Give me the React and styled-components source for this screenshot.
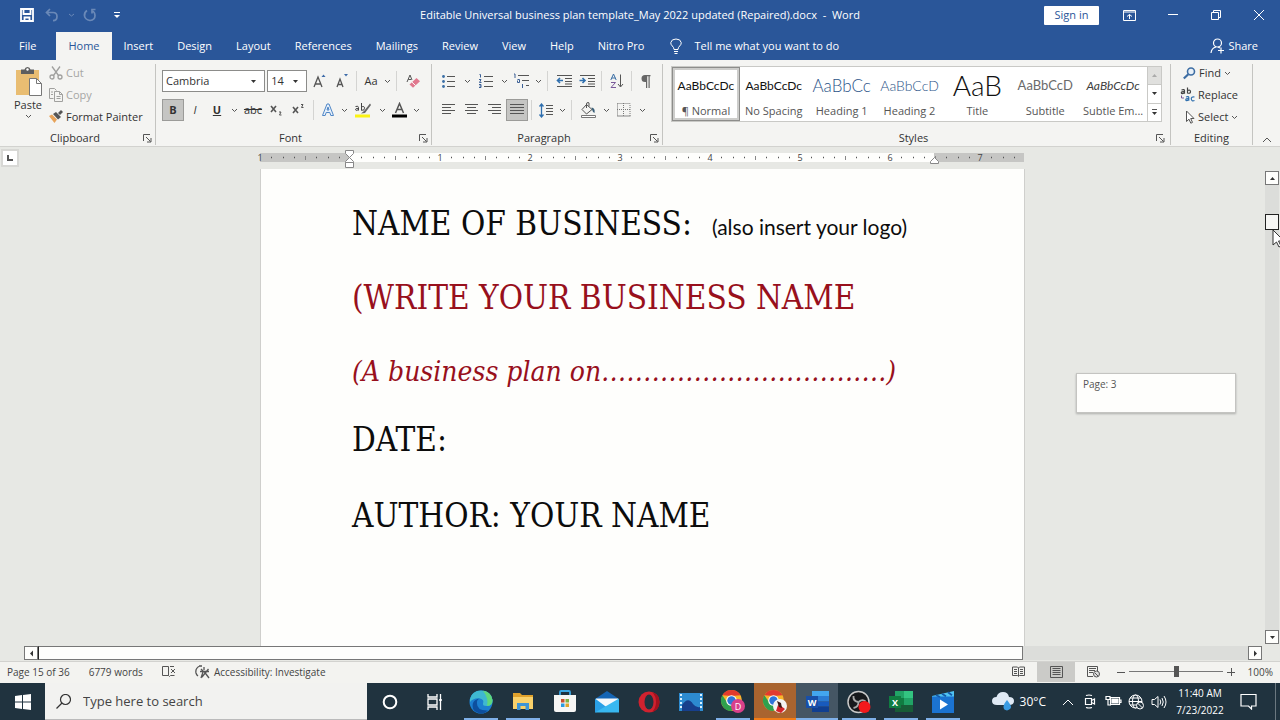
import React from "react";
import styled, { createGlobalStyle, css } from "styled-components";

const blue = "#2a5699";
const ui = '"Open Sans", "Noto Sans", sans-serif';
const body = 'Lato, "Open Sans", sans-serif';
const serif = '"DejaVu Serif Condensed", "DejaVu Serif", serif';

const Global = createGlobalStyle`
  * { box-sizing: border-box; }
  body { margin: 0; font-family: ${ui}; font-size: 11px; line-height: 16px; color: #333; background: #e7e8e4; }
  button, input, select { font: inherit; color: inherit; margin: 0; padding: 0; border: 0; background: none; border-radius: 0; }
  svg { display: block; flex: none; }
  p { margin: 0; }
`;

const Screen = styled.div`
  min-height: 100vh;
  display: flex;
  flex-direction: column;
  overflow: hidden;
`;

/* title bar and tabs */
const TitleBar = styled.header`
  display: grid;
  grid-template-columns: 1fr auto 1fr;
  align-items: center;
  height: 30px;
  background: ${blue};
  color: #fff;
`;
const QuickAccess = styled.div`
  display: flex;
  align-items: center;
  gap: 3px;
  padding-left: 16px;
`;
const QuickButton = styled.button`
  display: grid;
  place-items: center;
  width: ${(p) => p.$w || 22}px;
  height: 22px;
  opacity: ${(p) => (p.$dim ? 0.3 : 1)};
`;
const DocTitle = styled.h1`
  margin: 0;
  font-size: 11px;
  line-height: 16px;
  font-weight: 400;
  white-space: pre;
`;
const WindowControls = styled.div`
  display: flex;
  justify-content: flex-end;
  align-items: center;
`;
const SignIn = styled.button`
  width: 55px;
  height: 19px;
  margin-right: 9px;
  border-radius: 1px;
  background: #fff;
  color: ${blue};
`;
const WindowButton = styled.button`
  display: grid;
  place-items: center;
  width: 43px;
  height: 28px;
`;
const Tabs = styled.nav`
  display: flex;
  align-items: stretch;
  height: 30px;
  padding-left: 1px;
  background: ${blue};
  color: #fff;
`;
const Tab = styled.button`
  padding: 2px 12px 0;
  white-space: nowrap;
  ${(p) => p.$file && css`padding: 2px 18px 0; margin-right: 2px;`}
  ${(p) => p.$active && css`background: #f4f4f2; color: ${blue}; margin-top: 2px; padding-top: 0;`}
`;
const TellMe = styled.button`
  display: flex;
  align-items: center;
  gap: 12px;
  margin-left: 14px;
  padding-top: 2px;
`;
const Share = styled.button`
  display: flex;
  align-items: center;
  gap: 3px;
  margin-left: auto;
  margin-right: 22px;
  padding-top: 2px;
`;

/* ribbon */
const Ribbon = styled.section`
  display: flex;
  height: 87px;
  padding: 4px 0 1px 1px;
  background: #f4f4f2;
  border-bottom: 1px solid #d2d2cf;
`;
const Group = styled.div`
  display: flex;
  flex-direction: column;
  flex: ${(p) => (p.$grow ? "1 1 0" : "none")};
  min-width: 0;
  width: ${(p) => (p.$w ? p.$w + "px" : "auto")};
  padding: 0 ${(p) => (p.$grow ? 8 : 6)}px;
  border-right: 1px solid #c4c4c1;
`;
const GroupBody = styled.div`
  display: flex;
  flex: 1;
  min-width: 0;
`;
const ToolRows = styled.div`
  display: flex;
  flex-direction: column;
  gap: 7px;
  flex: 1;
  padding-top: 6px;
`;
const GroupFoot = styled.div`
  display: flex;
  align-items: center;
  height: 14px;
  & > span { flex: 1; text-align: center; }
  & > button { margin-right: -3px; }
`;
const ToolRow = styled.div`
  display: flex;
  align-items: center;
  height: 22px;
`;
const Tool = styled.button`
  display: grid;
  place-items: center;
  flex: none;
  width: ${(p) => p.$w || 22}px;
  height: 22px;
  ${(p) => p.$on && css`background: #c5c5c3; border: 1px solid #9b9b99;`}
`;
const Divider = styled.span`
  flex: none;
  width: 1px;
  height: 20px;
  margin: 0 4px 0 3px;
  background: #d4d4d2;
`;
const Combo = styled.label`
  display: grid;
  grid-template-columns: 1fr 14px;
  align-items: center;
  width: ${(p) => p.$w}px;
  height: 22px;
  margin-right: 2px;
  border: 1px solid #8c8c8a;
  background: #fff;
  select {
    grid-area: 1 / 1 / 2 / 3;
    appearance: none;
    width: 100%;
    padding-left: 3px;
    outline: 0;
  }
  svg { grid-area: 1 / 2; pointer-events: none; }
`;
const PasteButton = styled.button`
  display: flex;
  flex-direction: column;
  align-items: center;
  gap: 1px;
  width: 42px;
  height: 62px;
  padding-top: 3px;
`;
const Stack = styled.div`
  display: flex;
  flex-direction: column;
`;
const SmallButton = styled.button`
  display: flex;
  align-items: center;
  gap: 3px;
  height: 22px;
  padding-left: ${(p) => p.$indent || 0}px;
  padding-bottom: 4px;
  white-space: nowrap;
  color: ${(p) => (p.$off ? "#a6a6a4" : "#333")};
`;
const Gallery = styled.div`
  display: flex;
  height: 56px;
  margin-top: 2px;
  border: 1px solid #c9c9c6;
  background: #fff;
  flex: 1;
  min-width: 0;
`;
const StyleTile = styled.button`
  display: grid;
  grid-template-rows: 36px 16px;
  justify-items: center;
  flex: 1 1 0;
  min-width: 0;
  white-space: nowrap;
  color: #555;
  ${(p) => p.$on && css`box-shadow: inset 0 0 0 1px #8d8d8b, inset 0 0 0 3px #cdcdcb;`}
`;
const Preview = styled.span`
  font-family: ${body};
  font-size: ${(p) => p.$size || 12}px;
  line-height: 37px;
  font-weight: ${(p) => p.$weight || 400};
  font-style: ${(p) => (p.$italic ? "italic" : "normal")};
  color: ${(p) => p.$color || "#111"};
`;
const GalleryScroll = styled.div`
  display: flex;
  flex-direction: column;
  width: 14px;
  border-left: 1px solid #c9c9c6;
`;
const ScrollStep = styled.button`
  display: grid;
  place-items: center;
  flex: 1;
  background: ${(p) => (p.$off ? "#e0e0de" : "#fff")};
  & + & { border-top: 1px solid #c9c9c6; }
`;
const Collapse = styled.button`
  display: flex;
  align-items: flex-end;
  justify-content: center;
  flex: none;
  width: 27px;
  padding-bottom: 2px;
`;

/* workspace */
const Workspace = styled.main`
  position: relative;
  display: grid;
  grid-template-columns: 20px 1fr 15px;
  grid-template-rows: 22px 1fr 15px;
  flex: 1;
  min-height: 0;
`;
const TabStop = styled.button`
  display: grid;
  place-items: center;
  width: 18px;
  height: 18px;
  margin: 2px 0 0 1px;
  background: #fff;
  border: 2px solid #d8d8d5;
`;
const RulerRow = styled.div`
  display: flex;
  justify-content: center;
  overflow: hidden;
`;
const Canvas = styled.div`
  grid-column: 2;
  display: flex;
  justify-content: center;
  overflow: hidden;
`;
const Sheet = styled.article`
  width: 765px;
  padding: 35px 60px 60px 91px;
  background: #fefefc;
  border: solid #cfcfcc;
  border-width: 0 1px;
`;
const Line = styled.p`
  display: flex;
  align-items: baseline;
  height: 40px;
  font-family: ${serif};
  font-size: ${(p) => (p.$italic ? 28 : 33)}px;
  font-style: ${(p) => (p.$italic ? "italic" : "normal")};
  line-height: 40px;
  margin-bottom: ${(p) => p.$after || 36}px;
  white-space: nowrap;
  color: ${(p) => (p.$red ? "#98101c" : "#0c0c0c")};
`;
const Aside = styled.span`
  margin-left: 20px;
  font-family: ${body};
  font-size: 21px;
`;
const VScroll = styled.div`
  grid-column: 3;
  grid-row: 2;
  display: flex;
  flex-direction: column;
  padding: 2px 1px 2px 0;
`;
const HScroll = styled.div`
  grid-column: 1 / 4;
  display: flex;
  padding: 0 18px 1px 24px;
`;
const ScrollButton = styled.button`
  display: grid;
  place-items: center;
  flex: none;
  width: 14px;
  height: 14px;
  background: #fefefc;
  border: 1px solid #777;
`;
const VTrack = styled.div`
  flex: 1;
  padding-top: 29px;
  background: #dcddda;
`;
const VThumb = styled.div`
  height: 16px;
  border: 1px solid #222;
  background: #f6f6f4;
`;
const HTrack = styled.div`
  flex: 1;
  display: flex;
  background: #dcddda;
`;
const HThumb = styled.div`
  width: 81.4%;
  border: 1px solid #777;
  border-left: 1px solid #222;
  background: #fefefc;
`;
const PageTip = styled.div`
  position: absolute;
  top: 226px;
  right: 44px;
  width: 160px;
  height: 40px;
  padding: 2px 6px;
  background: #fefefc;
  border: 1px solid #c4c4c1;
  box-shadow: 0 1px 2px rgba(0, 0, 0, 0.25);
  font-size: 10px;
  color: #555;
`;
const Pointer = styled.svg`
  position: absolute;
  top: 82px;
  right: -6px;
`;

/* status bar */
const StatusBar = styled.footer`
  display: flex;
  align-items: center;
  height: 22px;
  padding: 0 7px 2px;
  background: #f3f3f0;
  border-top: 1px solid #d2d2cf;
  font-size: 10px;
  color: #444;
`;
const StatusItem = styled.button`
  display: flex;
  align-items: center;
  gap: 4px;
  margin-right: 19px;
  white-space: nowrap;
`;
const StatusRight = styled.div`
  display: flex;
  align-items: center;
  margin-left: auto;
`;
const ViewButton = styled.button`
  display: grid;
  place-items: center;
  width: 38px;
  height: 20px;
  background: ${(p) => (p.$on ? "#cbcbc8" : "none")};
`;
const ZoomStep = styled.button`
  display: grid;
  place-items: center;
  width: 16px;
`;
const ZoomSlider = styled.input`
  appearance: none;
  width: 94px;
  height: 12px;
  background: linear-gradient(#777, #777) center / 100% 1px no-repeat;
  &::-webkit-slider-thumb { appearance: none; width: 5px; height: 11px; background: #555; }
`;
const ZoomValue = styled.span`
  width: 34px;
  text-align: right;
`;

/* taskbar */
const Taskbar = styled.footer`
  display: flex;
  height: 37px;
  background: #20333f;
  color: #fff;
`;
const Start = styled.button`
  display: grid;
  place-items: center;
  width: 45px;
`;
const Search = styled.label`
  display: flex;
  align-items: center;
  gap: 12px;
  width: 322px;
  padding-left: 11px;
  background: #f2f2f0;
  color: #333;
  border-bottom: 1px solid #bbb;
  input { flex: 1; outline: 0; font-size: 13px; line-height: 20px; }
  input::placeholder { color: #444; opacity: 1; }
`;
const TaskButton = styled.button`
  display: grid;
  place-items: center;
  width: ${(p) => p.$w || 42}px;
  background: ${(p) => p.$bg || "none"};
  ${(p) => p.$open && css`
    background-image: linear-gradient(${p.$line || "#7fb0e8"}, ${p.$line || "#7fb0e8"});
    background-size: ${p.$bg ? "100%" : "34px"} 2px;
    background-position: bottom;
    background-repeat: no-repeat;
  `}
`;
const Apps = styled.div`
  display: flex;
  margin-left: 3px;
`;
const Tray = styled.div`
  display: flex;
  align-items: center;
  margin-left: auto;
`;
const Weather = styled.button`
  display: flex;
  align-items: center;
  gap: 6px;
  margin-right: 10px;
  font-size: 12px;
`;
const TrayButton = styled.button`
  display: grid;
  place-items: center;
  width: 23px;
  height: 30px;
`;
const Clock = styled.div`
  width: 58px;
  text-align: center;
  font-size: 10px;
  line-height: 17px;
`;
const Notifications = styled(TrayButton)`
  width: 39px;
  margin-right: 7px;
`;
const ShowDesktop = styled.button`
  width: 5px;
  height: 37px;
  border-left: 1px solid #6b7880;
`;

/* icons */
const Svg = ({ w = 16, h = w, children, ...rest }) => (
  <svg width={w} height={h} viewBox={`0 0 ${w} ${h}`} fill="none" stroke="#555" strokeWidth="1" aria-hidden="true" {...rest}>
    {children}
  </svg>
);
const ChevronIcon = () => <Svg w={7} h={5}><path d="M1 1l2.500 2.500L6 1" /></Svg>;
const Chevron = ({ w = 12, label }) => <Tool $w={w} aria-label={label}><ChevronIcon /></Tool>;
const Arrow = ({ dir = "down", color = "#333" }) => (
  <Svg w={7} h={7} stroke="none" fill={color}>
    <path d={{ down: "M1 2h5l-2.500 3z", up: "M1 5h5l-2.500-3z", left: "M5 .5v6l-3-3z", right: "M2 .5v6l3-3z" }[dir]} />
  </Svg>
);
const Launcher = ({ label }) => (
  <button aria-label={label}>
    <Svg w={9} h={9}><path d="M.5 7V.5H7M3 3l4.500 4.500M8 4v4H4" /></Svg>
  </button>
);
const Lines = ({ rows }) => (
  <Svg w={16} h={14}>
    {rows.map(([x, n], i) => <path key={i} d={`M${x} ${i * 3 + 1.5}h${n}`} />)}
  </Svg>
);
const BulletIcon = () => (
  <Svg w={14} h={15}>
    <path d="M5 2.500h8M5 7.500h8M5 12.500h8" />
    <g fill="#3a6ea5" stroke="none"><circle cx="1.500" cy="2.500" r="1.400" /><circle cx="1.500" cy="7.500" r="1.400" /><circle cx="1.500" cy="12.500" r="1.400" /></g>
  </Svg>
);
const NumberIcon = () => (
  <Svg w={14} h={16}>
    <path d="M5 3.500h9M5 8.500h9M5 13.500h9" />
    <g stroke="#3a5f95"><path d="M.5 1.500h1v3M0 6.500h2L.5 9.500H2.500M0 11.500h2v3H0M.5 13h1.500" /></g>
  </Svg>
);
const MultiIcon = () => (
  <Svg w={17} h={16}>
    <path d="M5 2.500h11M9 7.500h7M13 12.500h3" />
    <g stroke="#3a5f95"><path d="M1 1h1v4M4.500 6.500h2v3h-2v-2M9.500 11v4" /></g>
  </Svg>
);
const IndentIcon = ({ out }) => (
  <Svg w={16} h={14}>
    <path d="M1 1.500h15M9 4.500h7M9 7.500h7M1 12.500h15M9 10h7" />
    <path d={out ? "M7 6.500H1.500M4 4L1.500 6.500 4 9" : "M.5 6.500H6M3.500 4L6 6.500 3.500 9"} stroke="#2f6fae" strokeWidth="1.600" />
  </Svg>
);
const SortIcon = () => (
  <Svg w={14} h={16}>
    <path d="M.8 7L3.500 1l2.700 6M1.800 5h3.500" stroke="#3a6ea5" />
    <path d="M1 9.500h4.500L1 14.500h5" stroke="#7a5a9a" />
    <path d="M10.500 1.500v12M8 11l2.500 3 2.500-3" />
  </Svg>
);
const SpacingIcon = () => (
  <Svg w={14} h={15}>
    <path d="M7 2.500h7M7 5.500h7M7 8.500h7M7 11.500h7" />
    <path d="M2.500 1v13M.5 3.500l2-2.500 2 2.500M.5 11.500l2 2.500 2-2.500" stroke="#2f6fae" strokeWidth="1.300" />
  </Svg>
);
const ShadeIcon = () => (
  <Svg w={17} h={16}>
    <path d="M6.500 2.500L12 7.500 6.500 12 2 7.500zM6.500 6V2q0-1.500 1.500-1.500T9 2v2.500" />
    <path d="M11.500 5.500q4 .5 3 5.500-2-1-2.500-3.500z" fill="#3a6079" stroke="none" />
    <path d="M1.500 13.500h14v2h-14z" fill="#fff" stroke="#777" />
  </Svg>
);
const BorderIcon = () => (
  <Svg w={14} h={14}>
    <path d="M.5.5h12.500v12.500M.5.5v12.500M6.500 0v13M0 6.500h13" strokeDasharray="1 1" stroke="#777" />
    <path d="M0 13h13.500" stroke="#888" />
  </Svg>
);
const GrowIcon = ({ down }) => (
  <Svg w={14} h={16}>
    {down
      ? <><path d="M2 14l3-8 3 8M3.200 11.500h3.600" strokeWidth="1.300" /><path d="M9 1h4l-2 2.500z" fill="#3c6aa8" stroke="none" /></>
      : <><path d="M1 14L5 4l4 10M2.500 11h5" strokeWidth="1.300" /><path d="M8.500 4h4l-2-2.500z" fill="#3c6aa8" stroke="none" /></>}
  </Svg>
);
const EraserIcon = () => (
  <Svg w={15} h={15}>
    <path d="M1 8l3-7 2 5M2.200 5.500H5" />
    <path d="M3.500 10.500L10.500 4l3.500 3.200-7 6.600z" fill="#e0788e" stroke="none" />
    <path d="M6 8.200l3.500 3.300" stroke="#fff" />
  </Svg>
);
const OutlineAIcon = () => (
  <Svg w={14} h={16}>
    <path d="M1.500 13.500L6 2h2l4.500 11.500h-2.700l-1-3H5.200l-1 3zM6 8h2L7 5z" stroke="#4f86c6" fill="#e6f0fb" />
  </Svg>
);
const HighlightIcon = () => (
  <Svg w={18} h={17}>
    <path d="M1.500 4.500q3-1 3 1v3M4.500 6.300q-3.300 0-3 1.500t3-.2M7.500 1v7.500M7.500 5q3-1.500 3 1.200t-3 2" stroke="#444" />
    <path d="M16 1.500L10 9l-3 2.500 4-.5 6-8z" fill="#666" stroke="none" />
    <path d="M1 12.500h15v3H1z" fill="#fbf313" stroke="none" />
  </Svg>
);
const FontColorIcon = () => (
  <Svg w={15} h={16}>
    <path d="M3.500 11L7.500 1.500 11.500 11M5 7.500h5" strokeWidth="1.500" />
    <path d="M0 12.500h15v3H0z" fill="#000" stroke="none" />
  </Svg>
);
const PasteIcon = () => (
  <Svg w={28} h={29}>
    <path d="M2 3h23v25H2z" fill="#e9bd72" stroke="none" />
    <path d="M7 2.500h3.500q.5-2.500 3-2.500t3 2.500H20V7H7z" fill="#5e5e5e" stroke="none" /><circle cx="13.500" cy="2.500" r="1.200" fill="#fff" stroke="none" />
    <path d="M15.500 11.500h7l5 5v12h-12z" fill="#fff" stroke="#777" /><path d="M22.500 11.500v5h5" stroke="#777" />
  </Svg>
);
const CutIcon = () => (
  <Svg w={14} h={14} stroke="#a0a09e" strokeWidth="1.300">
    <path d="M3 .5l6.500 9M11 .5l-6.500 9" /><circle cx="3" cy="11" r="2" /><circle cx="11" cy="11" r="2" />
  </Svg>
);
const CopyIcon = () => (
  <Svg w={14} h={14} stroke="#a0a09e">
    <path d="M4.500 10.500h-4V.5h5l2 2M2 4h2M2 6.500h2" /><path d="M5.500 3.500h5l3 3v7h-8zM10.500 3.500v3h3M7.500 8.500h4M7.500 10.500h4" />
  </Svg>
);
const PainterIcon = () => (
  <Svg w={14} h={14} stroke="none">
    <path d="M0 6l3-1.500L8 9.500 5.500 13z" fill="#e7a35a" /><path d="M4 4l3-2 5 5-3 2.500z" fill="#555" /><path d="M9 3l3-3 2 2-3 3z" fill="#555" />
  </Svg>
);
const FindIcon = () => (
  <Svg w={13} h={13} stroke="#3d6da3" strokeWidth="1.600"><circle cx="8" cy="4.500" r="3.500" fill="#e8f0f8" /><path d="M5.300 7.300L.8 11.500" strokeWidth="2.200" /></Svg>
);
const ReplaceIcon = () => (
  <Svg w={15} h={16}>
    <path d="M1.500 3q3-1 3 .8v3M4.500 4.700q-3.500-.2-3.200 1.300t3.200-.2M7.500.5v6M7.500 3.500q3-1 3 1.200t-3 1.300" stroke="#444" strokeWidth="1.200" />
    <path d="M6 10q2.800-1 2.800.8v3M8.800 11.700q-3.300-.2-3 1.300t3-.2M14.500 10q-3.500-.6-3.200 2t3.200 1.500" stroke="#2f6fae" strokeWidth="1.200" />
    <path d="M1.500 8.500v2.500h2.500" stroke="#7a5a9a" />
  </Svg>
);
const SelectIcon = () => <Svg w={10} h={14}><path d="M1.500 1v10.500l2.500-2.300 1.800 4 1.700-.8-1.800-3.900h3.300z" fill="#fff" /></Svg>;

const ALIGN = {
  left: [[1, 13], [1, 9], [1, 13], [1, 9]],
  center: [[1, 13], [3, 9], [1, 13], [3, 9]],
  right: [[1, 13], [5, 9], [1, 13], [5, 9]],
  justify: [[1, 14], [1, 14], [1, 14], [1, 14]],
};

const STYLES = [
  { name: "¶ Normal", text: "AaBbCcDc", on: true },
  { name: "No Spacing", text: "AaBbCcDc" },
  { name: "Heading 1", text: "AaBbCc", size: 17, weight: 300, color: "#2c5488" },
  { name: "Heading 2", text: "AaBbCcD", size: 14, weight: 300, color: "#2c5488" },
  { name: "Title", text: "AaB", size: 28, weight: 300 },
  { name: "Subtitle", text: "AaBbCcD", size: 13, color: "#6a6a6a" },
  { name: "Subtle Em...", text: "AaBbCcDc", italic: true, color: "#404040" },
];

const Ruler = () => {
  const marks = [];
  for (let k = -8; k <= 59; k++) {
    const x = 90 + k * 11.25;
    if (k === 0) continue;
    if (k % 8 === 0) marks.push(<text key={k} x={x} y={11.5} textAnchor="middle" fontSize="9" fill="#444" stroke="none">{Math.abs(k / 8)}</text>);
    else if (k % 4 === 0) marks.push(<path key={k} d={`M${Math.round(x) + 0.5} 7v4`} stroke="#888" />);
    else marks.push(<path key={k} d={`M${Math.round(x)} 8.500h1`} strokeWidth="1.500" />);
  }
  return (
    <Svg w={765} h={22} overflow="visible">
      <path d="M0 6h764v9H0z" fill="#c6c6c4" stroke="none" />
      <path d="M90 6h584v9H90z" fill="#fefefc" stroke="none" />
      <g transform="translate(0 2)">{marks}</g>
      <g fill="#fff" stroke="#888">
        <path d="M85.500 3.500h8v3l-4 4-4-4zM89.500 10.500l4 4v1h-8v-1zM85.500 15.500h8v5h-8z" />
        <path d="M674.500 10.500l4 4v2h-8v-2z" />
      </g>
    </Svg>
  );
};

/* taskbar pictures */
const Edge = () => (
  <Svg w={24} stroke="none">
    <circle cx="12" cy="12" r="11.500" fill="#1c7fd0" />
    <path d="M1 9Q3 .5 12 .5q10 0 11.500 9.500.5 6-6 6-4 0-3.500-2.500 1.500-4-3-5Q5 7.500 1 12z" fill="#3fb8d0" />
    <path d="M14 .7q8.500 1.300 9.500 9.300.3 5.500-5.500 6 2-7-4-15.300z" fill="#5fd77c" />
    <path d="M8 12q-1 9 11 8.500-4 4-9 2.700Q2 21 4 13q1.500-4 7-4.500-3 1-3 3.500z" fill="#0d4f9e" />
  </Svg>
);
const Folder = () => (
  <Svg w={22} h={19} stroke="none">
    <path d="M1 1h7l2 2h11v14H1z" fill="#e0a22c" /><path d="M1 5h20v12H1z" fill="#f9d16a" />
    <path d="M5 18v-7h12v7h-3.500v-4h-5v4z" fill="#3f95d6" />
  </Svg>
);
const Store = () => (
  <Svg w={22} h={23} stroke="none">
    <path d="M6 6V2q0-1 1-1h8q1 0 1 1v4" stroke="#3aa7e4" strokeWidth="1.800" /><path d="M0 5h22v15q0 2-2 2H2q-2 0-2-2z" fill="#f6f6f4" />
    <path d="M7 9h3.500v3.500H7z" fill="#c8502e" /><path d="M11.500 9H15v3.500h-3.500z" fill="#7db343" /><path d="M7 13.500h3.500V17H7z" fill="#2b9be0" /><path d="M11.500 13.500H15V17h-3.500z" fill="#e0a62a" />
  </Svg>
);
const Mail = () => (
  <Svg w={24} h={22} stroke="none">
    <path d="M0 8L12 0l12 8v4H0z" fill="#1565b4" /><path d="M1 7.500h22v9H1z" fill="#f4f8fb" /><path d="M0 7.500L14 18 0 21.500z" fill="#2aa0e6" /><path d="M24 7.500L0 21.500h24z" fill="#38b8f0" />
  </Svg>
);
const Opera = () => (
  <Svg w={22} stroke="none"><circle cx="11" cy="11" r="10.500" fill="#d0222f" /><ellipse cx="11" cy="11" rx="4.500" ry="7.600" fill="#20333f" /><path d="M14 1q7.500 2 7.500 10T14 21q4-4 4-10T14 1z" fill="#a3121f" /></Svg>
);
const Film = () => (
  <Svg w={24} h={18} stroke="none">
    <path d="M0 0h24v18H0z" fill="#2d8bd0" /><path d="M3 12q6-9 11-1 3 4 7 3v4H3z" fill="#173f8c" />
    <path d="M2 1v16M22 1v16" stroke="#d9f1ff" strokeWidth="2" strokeDasharray="2 2" />
  </Svg>
);
const Chrome = ({ badge }) => (
  <Svg w={26} h={25} stroke="none">
    <circle cx="11.500" cy="11.500" r="10.500" fill="#f8b62c" /><path d="M2.400 6.200A10.500 10.500 0 0 1 20.600 6.200L11.500 7z" fill="#e23a2e" /><path d="M2.400 6.200A10.500 10.500 0 0 0 11.500 22L15 14 7.500 14z" fill="#2fa04e" />
    <circle cx="11.500" cy="11.500" r="5.300" fill="#fff" /><circle cx="11.500" cy="11.500" r="4.200" fill="#2f74d8" />
    {badge === "D"
      ? <><circle cx="18" cy="17" r="7" fill="#d8408a" /><text x="18" y="20.500" textAnchor="middle" fontSize="9" fill="#fff">D</text></>
      : <><circle cx="18" cy="17" r="7" fill="#f3f3f3" /><path d="M14 22l2-6 3 1 4 3-4 4z" fill="#d3242c" /><path d="M15 12l4 2 1 5-3-1z" fill="#3a1a18" /></>}
  </Svg>
);
const Word = () => (
  <Svg w={23} h={21} stroke="none">
    <path d="M6 0h17v5H6z" fill="#43a6ee" /><path d="M6 5h17v5.500H6z" fill="#2b7cd3" /><path d="M6 10.500h17v5H6z" fill="#185abd" /><path d="M6 15.500h17V21H6z" fill="#103f91" />
    <path d="M0 5h12v12H0z" fill="#184fa8" /><text x="6" y="14.500" textAnchor="middle" fontSize="9" fontWeight="700" fill="#fff">W</text>
  </Svg>
);
const Excel = () => (
  <Svg w={24} h={21} stroke="none">
    <path d="M6 0h9v7H6z" fill="#21a366" /><path d="M15 0h9v7h-9z" fill="#33c481" /><path d="M6 7h9v7H6z" fill="#107c41" /><path d="M15 7h9v7h-9z" fill="#21a366" /><path d="M6 14h18v7H6z" fill="#185c37" />
    <path d="M0 5h12v12H0z" fill="#107c41" /><text x="6" y="14.500" textAnchor="middle" fontSize="9" fontWeight="700" fill="#fff">X</text>
  </Svg>
);
const Obs = () => (
  <Svg w={24} h={24}>
    <circle cx="11.500" cy="12" r="10.500" fill="#17191c" stroke="#c8c8c8" strokeWidth="1.500" />
    <path d="M11 12q-5-1-4.500-6M11.500 12q4-3.500 7-.5M11.500 12q0 5-5 6" stroke="#a8a8a8" strokeWidth="1.800" /><circle cx="17.500" cy="17" r="6" fill="#f3191b" stroke="none" />
  </Svg>
);
const Movies = () => (
  <Svg w={24} h={22} stroke="none">
    <path d="M1 5L23 0v6H1z" fill="#50c4f3" /><path d="M1 5.500h22V22H1z" fill="#1b73d1" /><path d="M5 4l4 2M11 2.700l4 2.500M17 1.300l4 3" stroke="#1459a8" strokeWidth="1.800" /><path d="M9 8.500v10l8-5z" fill="#fff" />
  </Svg>
);

const TABS = ["Insert", "Design", "Layout", "References", "Mailings", "Review", "View", "Help", "Nitro Pro"];

export default function App() {
  return (
    <Screen>
      <Global />
      <TitleBar>
        <QuickAccess>
          <QuickButton aria-label="Save">
            <Svg w={14} stroke="#fff" strokeWidth="1.800"><path d="M1 1h12v12H1zM3.500 1.500v4.500h7V1.500M4.500 13V9.500h5V13" /></Svg>
          </QuickButton>
          <QuickButton $dim aria-label="Undo">
            <Svg w={14} h={14} stroke="#fff" strokeWidth="1.700"><path d="M5 1L1.500 4.500 5 8M2 4.500h6q4 0 4 4t-4 4.200" /></Svg>
          </QuickButton>
          <QuickButton $dim $w={10} aria-label="Undo list"><Svg w={7} h={5} stroke="#fff"><path d="M1 1l2.500 2L6 1" /></Svg></QuickButton>
          <QuickButton $dim aria-label="Repeat">
            <Svg w={14} h={14} stroke="#fff" strokeWidth="1.700"><path d="M4 2.500Q1 4.500 1.500 8t5.500 4.500q5-.5 5-5 0-2.500-2-4.500M12.500 1.500H9v4" /></Svg>
          </QuickButton>
          <QuickButton $w={26} aria-label="Customize Quick Access Toolbar">
            <Svg w={8} h={8} stroke="#fff"><path d="M1 1.500h6" /><path d="M1 4h6L4 7z" fill="#fff" stroke="none" /></Svg>
          </QuickButton>
        </QuickAccess>
        <DocTitle>{"Editable Universal business plan template_May 2022 updated (Repaired).docx  -  Word"}</DocTitle>
        <WindowControls>
          <SignIn>Sign in</SignIn>
          <WindowButton aria-label="Ribbon Display Options">
            <Svg w={13} h={11} stroke="#fff"><path d="M.5.500h12v10H.5zM.5 2h12" /><path d="M6.500 9V4.500M4 6.500l2.500-2 2.500 2" /></Svg>
          </WindowButton>
          <WindowButton aria-label="Minimize"><Svg w={10} h={2} stroke="#fff"><path d="M0 .5h10" /></Svg></WindowButton>
          <WindowButton aria-label="Restore"><Svg w={10} h={10} stroke="#fff"><path d="M.5 2.500h7v7h-7zM2.500 2.500v-2h7v7h-2" /></Svg></WindowButton>
          <WindowButton aria-label="Close"><Svg w={10} h={10} stroke="#fff"><path d="M0 0l10 10M10 0L0 10" /></Svg></WindowButton>
        </WindowControls>
      </TitleBar>
      <Tabs>
        <Tab $file>File</Tab>
        <Tab $active>Home</Tab>
        {TABS.map((t) => <Tab key={t}>{t}</Tab>)}
        <TellMe>
          <Svg w={12} h={17} stroke="#fff"><path d="M4 11.500Q4 9.500 2.300 8 .5 6.300.8 4.500 1.500 1 6 1t5.200 3.500Q11.500 6.300 9.700 8 8 9.500 8 11.500zM4 13.500h4M4.500 15.500h3" /></Svg>
          Tell me what you want to do
        </TellMe>
        <Share>
          <Svg w={15} h={16} stroke="#fff" strokeWidth="1.200"><circle cx="7.500" cy="5" r="4" /><path d="M1 15q.5-5 5-6M8 9l2 1M11 9.500v6M8 12.500h6" /></Svg>
          Share
        </Share>
      </Tabs>

      <Ribbon>
        <Group $w={155}>
          <GroupBody>
            <PasteButton><PasteIcon />Paste<ChevronIcon /></PasteButton>
            <Stack>
              <SmallButton $off><CutIcon />Cut</SmallButton>
              <SmallButton $off><CopyIcon />Copy</SmallButton>
              <SmallButton><PainterIcon />Format Painter</SmallButton>
            </Stack>
          </GroupBody>
          <GroupFoot><span>Clipboard</span><Launcher label="Clipboard options" /></GroupFoot>
        </Group>
        <Group $w={276}>
          <ToolRows>
            <ToolRow>
              <Combo $w={104}><select aria-label="Font"><option>Cambria</option></select><Arrow /></Combo>
              <Combo $w={40}><select aria-label="Font size"><option>14</option></select><Arrow /></Combo>
              <Tool aria-label="Grow font"><GrowIcon /></Tool>
              <Tool aria-label="Shrink font"><GrowIcon down /></Tool>
              <Divider />
              <Tool $w={20}>Aa</Tool><Chevron label="Change case" />
              <Divider />
              <Tool $w={24} aria-label="Clear formatting"><EraserIcon /></Tool>
            </ToolRow>
            <ToolRow>
              <Tool $on><b>B</b></Tool>
              <Tool><i>I</i></Tool>
              <Tool><u><b>U</b></u></Tool><Chevron label="Underline style" />
              <Tool $w={26}><s>abc</s></Tool>
              <Tool aria-label="Subscript"><Svg w={14} h={12} strokeWidth="1.600"><path d="M1 2l5 6M6 2L1 8" /><path d="M9 8h2L9.500 11h2" strokeWidth="1" /></Svg></Tool>
              <Tool aria-label="Superscript"><Svg w={14} h={12} strokeWidth="1.600"><path d="M1 3l5 6M6 3L1 9" /><path d="M9 .5h2L9.500 3.500h2" strokeWidth="1" /></Svg></Tool>
              <Divider />
              <Tool $w={20} aria-label="Text effects"><OutlineAIcon /></Tool><Chevron label="Text effects list" />
              <Tool $w={26} aria-label="Highlight"><HighlightIcon /></Tool><Chevron label="Highlight colors" />
              <Tool aria-label="Font color"><FontColorIcon /></Tool><Chevron label="Font colors" />
            </ToolRow>
          </ToolRows>
          <GroupFoot><span>Font</span><Launcher label="Font options" /></GroupFoot>
        </Group>
        <Group $w={231}>
          <ToolRows>
            <ToolRow>
              <Tool aria-label="Bullets"><BulletIcon /></Tool><Chevron w={14} label="Bullet styles" />
              <Tool $w={24} aria-label="Numbering"><NumberIcon /></Tool><Chevron label="Number styles" />
              <Tool aria-label="Multilevel list"><MultiIcon /></Tool><Chevron label="List styles" />
              <Divider />
              <Tool $w={24} aria-label="Decrease indent"><IndentIcon out /></Tool>
              <Tool aria-label="Increase indent"><IndentIcon /></Tool>
              <Divider />
              <Tool aria-label="Sort"><SortIcon /></Tool>
              <Divider />
              <Tool $w={20} aria-label="Show paragraph marks">
                <Svg w={10} h={13} stroke="none" fill="#666"><path d="M9.500 0H4Q.5 0 .5 3.500T4 7h1v6h1.200V1.200h1.300V13h1.200V1.200h.8z" /></Svg>
              </Tool>
            </ToolRow>
            <ToolRow>
              <Tool aria-label="Align left"><Lines rows={ALIGN.left} /></Tool>
              <Tool $w={24} aria-label="Center"><Lines rows={ALIGN.center} /></Tool>
              <Tool aria-label="Align right"><Lines rows={ALIGN.right} /></Tool>
              <Tool $on aria-label="Justify"><Lines rows={ALIGN.justify} /></Tool>
              <Divider />
              <Tool $w={20} aria-label="Line spacing"><SpacingIcon /></Tool><Chevron label="Line spacing list" />
              <Divider />
              <Tool $w={24} aria-label="Shading"><ShadeIcon /></Tool><Chevron label="Shading colors" />
              <Tool $w={24} aria-label="Borders"><BorderIcon /></Tool><Chevron label="Border list" />
            </ToolRow>
          </ToolRows>
          <GroupFoot><span>Paragraph</span><Launcher label="Paragraph options" /></GroupFoot>
        </Group>
        <Group $grow>
          <GroupBody>
            <Gallery>
              {STYLES.map((s) => (
                <StyleTile key={s.name} $on={s.on}>
                  <Preview $size={s.size} $weight={s.weight} $color={s.color} $italic={s.italic}>{s.text}</Preview>
                  <span>{s.name}</span>
                </StyleTile>
              ))}
              <GalleryScroll>
                <ScrollStep $off aria-label="Previous styles"><Arrow dir="up" color="#aaa" /></ScrollStep>
                <ScrollStep aria-label="Next styles"><Arrow /></ScrollStep>
                <ScrollStep aria-label="More styles"><Svg w={7} h={7}><path d="M1 .5h5" /><path d="M1 3h5L3.500 6z" fill="#333" stroke="none" /></Svg></ScrollStep>
              </GalleryScroll>
            </Gallery>
          </GroupBody>
          <GroupFoot><span>Styles</span><Launcher label="Styles options" /></GroupFoot>
        </Group>
        <Group $w={82}>
          <GroupBody>
            <Stack>
              <SmallButton $indent={6}><FindIcon />Find<ChevronIcon /></SmallButton>
              <SmallButton $indent={3}><ReplaceIcon />Replace</SmallButton>
              <SmallButton $indent={8}><SelectIcon />Select<ChevronIcon /></SmallButton>
            </Stack>
          </GroupBody>
          <GroupFoot><span>Editing</span></GroupFoot>
        </Group>
        <Collapse aria-label="Collapse the ribbon"><Svg w={10} h={6}><path d="M1 5l4-4 4 4" /></Svg></Collapse>
      </Ribbon>

      <Workspace>
        <TabStop aria-label="Tab stop"><Svg w={6} h={6} strokeWidth="2"><path d="M1 0v5h5" /></Svg></TabStop>
        <RulerRow><Ruler /></RulerRow>
        <Canvas>
          <Sheet>
            <Line $after={34}>NAME OF BUSINESS:<Aside>(also insert your logo)</Aside></Line>
            <Line $red $after={34}>(WRITE YOUR BUSINESS NAME</Line>
            <Line $red $italic $after={28}>(A business plan on…………………………….)</Line>
            <Line>DATE:</Line>
            <Line>AUTHOR: YOUR NAME</Line>
          </Sheet>
        </Canvas>
        <VScroll>
          <ScrollButton aria-label="Scroll up"><Arrow dir="up" /></ScrollButton>
          <VTrack><VThumb /></VTrack>
          <ScrollButton aria-label="Scroll down"><Arrow /></ScrollButton>
        </VScroll>
        <HScroll>
          <ScrollButton aria-label="Scroll left"><Arrow dir="left" /></ScrollButton>
          <HTrack><HThumb /></HTrack>
          <ScrollButton aria-label="Scroll right"><Arrow dir="right" /></ScrollButton>
        </HScroll>
        <PageTip role="tooltip">Page: 3</PageTip>
        <Pointer width="14" height="19" viewBox="0 0 14 19" aria-hidden="true">
          <path d="M1 1v15l3.500-3 2.500 5 2-1-2.500-5H12z" fill="#fff" stroke="#333" />
        </Pointer>
      </Workspace>

      <StatusBar>
        <StatusItem>Page 15 of 36</StatusItem>
        <StatusItem>6779 words</StatusItem>
        <StatusItem aria-label="Proofing errors">
          <Svg w={14} h={13}><path d="M6.500 1.500h-6v9h6l1 1 1-1h4M6.500 1.500v9M8 1.500h4M9 4l4 4M13 4L9 8" /></Svg>
        </StatusItem>
        <StatusItem>
          <Svg w={15} h={14}><path d="M5 1Q0 3 1 8q.5 2 2 3M4 1h3M6 4l3 3M9 2v3M5 6.500h9M8 7l-2 6M9.500 7l4.500 6M13.500 4L7 12" strokeWidth="1.300" /></Svg>
          Accessibility: Investigate
        </StatusItem>
        <StatusRight>
          <ViewButton aria-label="Read mode"><Svg w={13} h={11}><path d="M.5 1h5l1 1 1-1h5v8.500h-5l-1 1-1-1h-5zM6.500 2v8M2 3.500h3M2 5.500h3M2 7.500h3M8 3.500h3M8 5.500h3M8 7.500h3" /></Svg></ViewButton>
          <ViewButton $on aria-label="Print layout"><Svg w={13} h={12}><path d="M.5.5h12v11H.5zM2.500 2.500h8M2.500 4.500h8M2.500 6.500h8M2.500 8.500h8" /></Svg></ViewButton>
          <ViewButton aria-label="Web layout"><Svg w={14} h={12}><path d="M6 10.500H.5V.5h10V5M2 2.500h7M2 4.500h6M2 6.500h4" /><circle cx="9.500" cy="8" r="3" fill="#ddd" /><path d="M8 7l3 3" /></Svg></ViewButton>
          <ZoomStep aria-label="Zoom out"><Svg w={8} h={8}><path d="M0 4.500h8" /></Svg></ZoomStep>
          <ZoomSlider type="range" min="0" max="100" defaultValue="50" aria-label="Zoom" />
          <ZoomStep aria-label="Zoom in"><Svg w={8} h={8}><path d="M0 4.500h8M4.500 0v8" /></Svg></ZoomStep>
          <ZoomValue>100%</ZoomValue>
        </StatusRight>
      </StatusBar>

      <Taskbar>
        <Start aria-label="Start">
          <Svg w={16} h={16} stroke="none" fill="#fff"><path d="M0 2l7-1v6.500H0zM8 1l8-1v7.500H8zM0 8.500h7V15l-7-1zM8 8.500h8V16l-8-1z" /></Svg>
        </Start>
        <Search>
          <Svg w={15} h={15} stroke="#333" strokeWidth="1.200"><circle cx="9.500" cy="5.500" r="5" /><path d="M6 9L.5 14.500" /></Svg>
          <input type="search" aria-label="Search" placeholder="Type here to search" />
        </Search>
        <TaskButton $w={45} aria-label="Cortana"><Svg w={16} stroke="#fff" strokeWidth="2"><circle cx="8" cy="8" r="6.300" /></Svg></TaskButton>
        <TaskButton $w={45} aria-label="Task View"><Svg w={16} h={16} stroke="#fff" strokeWidth="1.300"><path d="M1 0v3h9V0M1 5h9v6H1zM1 16v-3h9v3M13.500 0v16M12 6h3" /></Svg></TaskButton>
        <Apps>
          <TaskButton $open aria-label="Edge"><Edge /></TaskButton>
          <TaskButton $open aria-label="File Explorer"><Folder /></TaskButton>
          <TaskButton aria-label="Store"><Store /></TaskButton>
          <TaskButton aria-label="Mail"><Mail /></TaskButton>
          <TaskButton aria-label="Opera"><Opera /></TaskButton>
          <TaskButton aria-label="Video"><Film /></TaskButton>
          <TaskButton $open aria-label="Chrome"><Chrome badge="D" /></TaskButton>
          <TaskButton $open $bg="#a9642f" $line="#f27c16" aria-label="Chrome, second profile"><Chrome /></TaskButton>
          <TaskButton $open $bg="#455664" aria-label="Word"><Word /></TaskButton>
          <TaskButton $open aria-label="OBS Studio"><Obs /></TaskButton>
          <TaskButton $open aria-label="Excel"><Excel /></TaskButton>
          <TaskButton $open aria-label="Movies"><Movies /></TaskButton>
        </Apps>
        <Tray>
          <Weather>
            <Svg w={22} h={19} stroke="none"><path d="M5 13q-5 0-5-4t4.500-4Q6 0 11 0t6 5q5 0 5 4t-5 4z" fill="#dfe9f4" /><path d="M15 8q4 5 4 7t-4 3.500Q11.500 18 11.500 15T15 8z" fill="#3a9be2" /></Svg>
            30°C
          </Weather>
          <TrayButton aria-label="Show hidden icons"><Svg w={12} h={8} stroke="#fff"><path d="M1 7l5-5 5 5" /></Svg></TrayButton>
          <TrayButton aria-label="Meet Now"><Svg w={13} h={16} stroke="#fff" strokeWidth="1.200"><path d="M1.500 4.500h6v6h-6zM7.500 6.500l3-1.500v5l-3-1.500M2 1.500q3-1 6 0M2 13.500q3 1 6 0" /></Svg></TrayButton>
          <TrayButton aria-label="Battery"><Svg w={17} h={13} stroke="#fff" strokeWidth="1.200"><path d="M5.500 2.500h9v7h-9zM14.500 5h1.500v2.500h-1.500" /><path d="M7 4h6v4H7z" fill="#fff" /><path d="M1 1.500h4v3H1zM3 5v5h3" /></Svg></TrayButton>
          <TrayButton aria-label="Network"><Svg w={17} h={16} stroke="#fff"><circle cx="7.500" cy="7.500" r="6.500" /><ellipse cx="7.500" cy="7.500" rx="3" ry="6.500" /><path d="M1 7.500h13M2 4h11M2 11h8" /><circle cx="12" cy="11.500" r="3.500" fill="#20333f" /><path d="M9.500 9l5 5" /></Svg></TrayButton>
          <TrayButton aria-label="Volume"><Svg w={17} h={14} stroke="#fff"><path d="M1 4.500h2.500L7 1.500v11L3.500 9.500H1zM9 4.500q1.500 2.500 0 5M11 3q2.500 4 0 8M13 1q4 6 0 12" /></Svg></TrayButton>
          <Clock>11:40 AM<br />7/23/2022</Clock>
          <Notifications aria-label="Notifications"><Svg w={17} h={17} stroke="#fff" strokeWidth="1.200"><path d="M1 1.500h15v11.500h-4.500v3l-3-3H1z" /></Svg></Notifications>
          <ShowDesktop aria-label="Show desktop" />
        </Tray>
      </Taskbar>
    </Screen>
  );
}
